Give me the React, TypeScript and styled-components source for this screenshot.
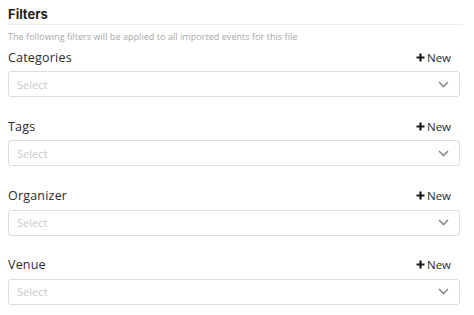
import React from 'react';
import styled, { createGlobalStyle } from 'styled-components';

const GlobalStyle = createGlobalStyle`
  html, body {
    margin: 0;
    padding: 0;
    background: #ffffff;
  }
  body {
    font-family: 'Open Sans', 'Liberation Sans', sans-serif;
    color: #222;
  }
`;

const Panel = styled.section`
  width: 452px;
  padding: 5px 14px 0 8px;
  display: flex;
  flex-direction: column;
`;

const Title = styled.h2`
  margin: 0;
  font-family: Inter, 'Open Sans', sans-serif;
  font-size: 13px;
  font-weight: 700;
  line-height: 18px;
  color: #1f1f1f;
  padding-bottom: 1px;
  border-bottom: 1.5px solid #ececec;
  margin-right: -3px;
`;

const Subtitle = styled.p`
  margin: 6px 0 0;
  font-size: 9px;
  line-height: 12px;
  color: #a6a6a6;
  letter-spacing: 0.05px;
`;

const FieldList = styled.div`
  display: flex;
  flex-direction: column;
  gap: 21.3px;
  margin-top: 6px;
`;

const Field = styled.div`
  display: flex;
  flex-direction: column;
  gap: 6px;
`;

const FieldHeader = styled.div`
  display: flex;
  align-items: center;
  justify-content: space-between;
  height: 16px;
`;

const Label = styled.label`
  font-size: 12.5px;
  color: #2b2b2b;
  letter-spacing: 0.2px;
`;

const NewButton = styled.button`
  border: 0;
  background: none;
  padding: 0;
  margin-right: 9px;
  display: inline-flex;
  align-items: center;
  gap: 2px;
  font-family: inherit;
  font-size: 11.5px;
  color: #2b2b2b;
  cursor: pointer;
`;

const SelectBox = styled.div`
  height: 26px;
  border: 1px solid #dedede;
  border-radius: 3px;
  display: flex;
  align-items: center;
  justify-content: space-between;
  padding: 0 10px 0 8px;
  box-sizing: border-box;
`;

const Placeholder = styled.span`
  font-size: 11px;
  color: #c9c9c9;
`;

const PlusIcon = () => (
  <svg width="9" height="9" viewBox="0 0 9 9">
    <path d="M4.5 0.5v8M0.5 4.5h8" stroke="#1a1a1a" strokeWidth="2.2" />
  </svg>
);

const ChevronIcon = () => (
  <svg width="11" height="7" viewBox="0 0 11 7">
    <path d="M1 1l4.5 4.5L10 1" fill="none" stroke="#8a8a8a" strokeWidth="1.6" />
  </svg>
);

const fields = ['Categories', 'Tags', 'Organizer', 'Venue'];

export default function App() {
  return (
    <>
      <GlobalStyle />
      <Panel>
        <Title>Filters</Title>
        <Subtitle>The following filters will be applied to all imported events for this file</Subtitle>
        <FieldList>
          {fields.map((name) => (
            <Field key={name}>
              <FieldHeader>
                <Label>{name}</Label>
                <NewButton>
                  <PlusIcon />
                  New
                </NewButton>
              </FieldHeader>
              <SelectBox>
                <Placeholder>Select</Placeholder>
                <ChevronIcon />
              </SelectBox>
            </Field>
          ))}
        </FieldList>
      </Panel>
    </>
  );
}
